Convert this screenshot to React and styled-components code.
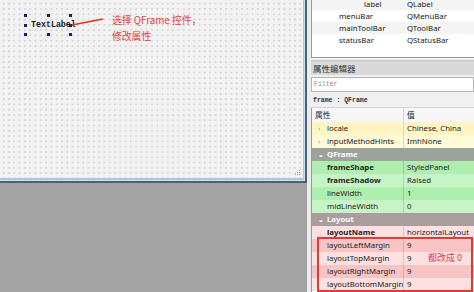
import React from 'react';
import styled, { createGlobalStyle } from 'styled-components';

const GlobalStyle = createGlobalStyle`
  html, body {
    margin: 0;
    padding: 0;
    width: 474px;
    height: 292px;
    overflow: hidden;
    background: #f0f0f0;
    font-family: "Noto Sans", "Noto Sans CJK SC", sans-serif;
  }
`;

const Screen = styled.div`
  display: flex;
  width: 474px;
  height: 292px;
  background: #f0f0f0;
`;

const MdiArea = styled.div`
  width: 307px;
  flex: none;
  display: flex;
  flex-direction: column;
  background: #a3a3a3;
`;

const FormFrame = styled.div`
  height: 178px;
  display: flex;
  background: #a9c8e6;
  padding: 0 2px 3px 0;
  border-right: 2px solid #47636b;
  border-bottom: 2px solid #47636b;
  box-shadow: inset -1px -1px 0 #cfe0f0;
`;

const Canvas = styled.div`
  position: relative;
  flex: 1;
  background-color: #f2f2f2;
  background-image: radial-gradient(circle, #d2d2d2 0.6px, transparent 0.9px);
  background-size: 5.3px 5.3px;
  background-position: 1px 1px;
  overflow: hidden;
`;

const Handle = styled.span`
  position: absolute;
  width: 3px;
  height: 3px;
  background: #1a1a7a;
`;

const TextLabel = styled.span`
  position: absolute;
  left: 31px;
  top: 20px;
  font-family: "Liberation Mono", monospace;
  font-weight: bold;
  font-size: 8.3px;
  color: #1a1a1a;
`;

const Note = styled.div`
  position: absolute;
  left: ${p => p.x}px;
  top: ${p => p.y}px;
  font-family: "Noto Sans CJK SC", "Noto Sans", sans-serif;
  font-size: 9.8px;
  line-height: 14px;
  color: #e8403c;
  white-space: nowrap;
`;

const Arrow = styled.svg`
  position: absolute;
  left: 0;
  top: 0;
`;

const Grip = styled.svg`
  position: absolute;
  right: 2px;
  bottom: 2px;
`;

const Splitter = styled.div`
  width: 4px;
  flex: none;
  background: #ececec;
`;

const RightPanel = styled.div`
  position: relative;
  flex: 1;
  display: flex;
  flex-direction: column;
  font-size: 7.8px;
  color: #222;
`;

const ObjectTree = styled.div`
  height: 57px;
  background: #fff;
  border-left: 1px solid #9a9a9a;
  border-bottom: 1px solid #9a9a9a;
  overflow: hidden;
  flex: none;
`;

const TreeRow = styled.div`
  display: grid;
  grid-template-columns: 95px 1fr;
  height: ${p => (p.first ? 10 : 12)}px;
  line-height: ${p => (p.first ? 9 : 12)}px;
  background: ${p => (p.alt ? '#f4f4f4' : '#fff')};
`;

const TreeName = styled.span`
  padding-left: ${p => p.indent}px;
`;

const DockTitle = styled.div`
  margin-top: 2px;
  height: 14px;
  line-height: 14px;
  padding-left: 2px;
  background: #d9d9d9;
  border-top: 1px solid #c4c4c4;
  font-family: "Noto Sans CJK SC", sans-serif;
  font-size: 8.5px;
  color: #333;
  flex: none;
`;

const FilterBox = styled.div`
  margin-top: 2px;
  height: 13px;
  line-height: 13px;
  background: #fff;
  border: 1px solid #b4b4b4;
  padding-left: 2px;
  font-family: "Liberation Mono", monospace;
  font-size: 6.5px;
  color: #8a8a8a;
  flex: none;
`;

const ClassLabel = styled.div`
  margin-top: 2px;
  height: 13px;
  line-height: 13px;
  padding-left: 2px;
  font-family: "Liberation Mono", monospace;
  font-size: 6.5px;
  font-weight: bold;
  color: #333;
  border-bottom: 1px solid #d6d6d6;
  flex: none;
`;

const PropTable = styled.div`
  border-left: 1px solid #9a9a9a;
  flex: 1;
  background: #fff;
`;

const PropRow = styled.div`
  display: grid;
  grid-template-columns: 92px 1fr;
  height: ${p => (p.header ? 14 : 13)}px;
  line-height: ${p => (p.header ? 14 : 13)}px;
  background: ${p => p.bg};
  color: ${p => (p.group ? '#fff' : '#222')};
  font-weight: ${p => (p.group ? 'bold' : 'normal')};
`;

const NameCell = styled.span`
  display: flex;
  align-items: center;
  padding-left: ${p => (p.header ? 3 : 6)}px;
  border-right: 1px solid ${p => (p.group ? 'transparent' : 'rgba(0,0,0,0.12)')};
  font-weight: ${p => (p.bold ? 'bold' : 'inherit')};
  white-space: nowrap;
  overflow: hidden;
  font-family: ${p => (p.header ? '"Noto Sans CJK SC", sans-serif' : 'inherit')};
`;

const Caret = styled.span`
  width: 9px;
  flex: none;
  font-size: 7px;
  color: ${p => (p.light ? '#fff' : '#9a9a9a')};
`;

const ValueCell = styled.span`
  padding-left: 3px;
  white-space: nowrap;
  font-family: ${p => (p.header ? '"Noto Sans CJK SC", sans-serif' : 'inherit')};
`;

const RedBox = styled.div`
  position: absolute;
  left: 6px;
  top: 237px;
  width: 152px;
  height: 51px;
  border: 2px solid #e53935;
`;

const BoxNote = styled.span`
  position: absolute;
  left: 117px;
  top: 251px;
  font-family: "Noto Sans CJK SC", sans-serif;
  font-size: 9px;
  color: #e8403c;
`;

const tree = [
  { name: 'label', type: 'QLabel', indent: 52, alt: true, first: true },
  { name: 'menuBar', type: 'QMenuBar', indent: 27 },
  { name: 'mainToolBar', type: 'QToolBar', indent: 27, alt: true },
  { name: 'statusBar', type: 'QStatusBar', indent: 27 },
];

const props = [
  { name: 'locale', value: 'Chinese, China', bg: '#fff5c4', caret: '›' },
  { name: 'inputMethodHints', value: 'ImhNone', bg: '#fffad8', caret: '›' },
  { name: 'QFrame', bg: '#9ca39c', group: true },
  { name: 'frameShape', value: 'StyledPanel', bg: '#aeeeae', bold: true },
  { name: 'frameShadow', value: 'Raised', bg: '#c6f4c6', bold: true },
  { name: 'lineWidth', value: '1', bg: '#aeeeae' },
  { name: 'midLineWidth', value: '0', bg: '#c6f4c6' },
  { name: 'Layout', bg: '#aa9d9d', group: true },
  { name: 'layoutName', value: 'horizontalLayout', bg: '#fde0e0', bold: true },
  { name: 'layoutLeftMargin', value: '9', bg: '#f8c4c4' },
  { name: 'layoutTopMargin', value: '9', bg: '#fde0e0' },
  { name: 'layoutRightMargin', value: '9', bg: '#f8c4c4' },
  { name: 'layoutBottomMargin', value: '9', bg: '#fde0e0' },
];

const handles = [
  [24, 14], [47, 14], [69, 14],
  [24, 24], [69, 24],
  [24, 33], [47, 33], [69, 33],
];

export default function App() {
  return (
    <Screen>
      <GlobalStyle />
      <MdiArea>
        <FormFrame>
          <Canvas>
            {handles.map(([x, y], i) => (
              <Handle key={i} style={{ left: x, top: y }} />
            ))}
            <TextLabel>TextLabel</TextLabel>
            <Arrow width="120" height="40">
              <line x1="72" y1="25" x2="103" y2="19" stroke="#e0302c" strokeWidth="1.6" />
            </Arrow>
            <Note x={112} y={13}>选择 QFrame 控件，</Note>
            <Note x={112} y={29}>修改属性</Note>
            <Grip width="7" height="7">
              <rect x="5" y="1" width="1" height="1" fill="#a8a8a8" />
              <rect x="3" y="3" width="1" height="1" fill="#a8a8a8" />
              <rect x="5" y="3" width="1" height="1" fill="#a8a8a8" />
              <rect x="1" y="5" width="1" height="1" fill="#a8a8a8" />
              <rect x="3" y="5" width="1" height="1" fill="#a8a8a8" />
              <rect x="5" y="5" width="1" height="1" fill="#a8a8a8" />
            </Grip>
          </Canvas>
        </FormFrame>
      </MdiArea>
      <Splitter />
      <RightPanel>
        <ObjectTree>
          {tree.map(r => (
            <TreeRow key={r.name} alt={r.alt} first={r.first}>
              <TreeName indent={r.indent}>{r.name}</TreeName>
              <span>{r.type}</span>
            </TreeRow>
          ))}
        </ObjectTree>
        <DockTitle>属性编辑器</DockTitle>
        <FilterBox>Filter</FilterBox>
        <ClassLabel>frame : QFrame</ClassLabel>
        <PropTable>
          <PropRow header bg="#f7f7f7">
            <NameCell header>属性</NameCell>
            <ValueCell header>值</ValueCell>
          </PropRow>
          {props.map(p => (
            <PropRow key={p.name} bg={p.bg} group={p.group}>
              <NameCell bold={p.bold} group={p.group}>
                <Caret light={p.group}>{p.group ? '⌄' : p.caret || ''}</Caret>
                {p.name}
              </NameCell>
              <ValueCell>{p.value}</ValueCell>
            </PropRow>
          ))}
        </PropTable>
        <RedBox />
        <BoxNote>都改成 0</BoxNote>
      </RightPanel>
    </Screen>
  );
}
